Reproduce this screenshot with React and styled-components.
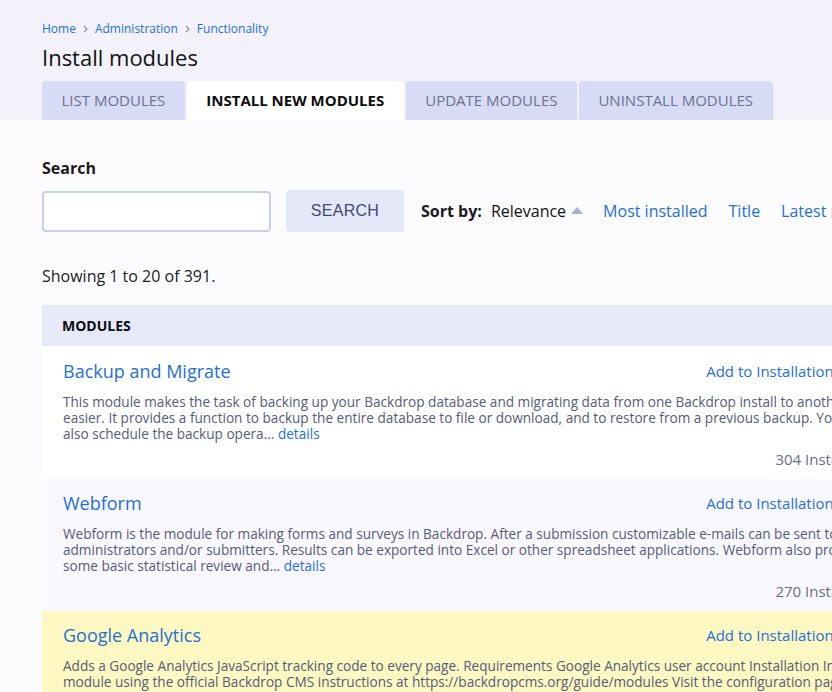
import React from "react";
import styled, { createGlobalStyle } from "styled-components";

const Global = createGlobalStyle`
  html, body { margin: 0; padding: 0; overflow: hidden; }
  body {
    background: #fcfcfe;
    font-family: "Open Sans", "Noto Sans", sans-serif;
    color: #1b1b1f;
  }
  * { box-sizing: border-box; }
  a { text-decoration: none; }
`;

const Page = styled.div`
  width: 832px;
  min-height: 692px;
`;

const Header = styled.header`
  background: #f3f2fb;
  padding: 20px 0 0 42px;
`;

const Breadcrumb = styled.nav`
  display: flex;
  align-items: center;
  gap: 7px;
  font-size: 12px;
  line-height: 18px;
  white-space: nowrap;
`;

const Crumb = styled.a`
  color: #1e6fd9;
`;

const Sep = styled.svg`
  width: 5px;
  height: 8px;
  flex: none;
`;

const Title = styled.h1`
  margin: 4px 0 9px;
  font-size: 22px;
  line-height: 30px;
  font-weight: 400;
  color: #111;
`;

const Tabs = styled.div`
  display: flex;
  gap: 2px;
  white-space: nowrap;
`;

const Tab = styled.a`
  display: block;
  flex: none;
  height: 39px;
  line-height: 39px;
  padding: 0 19.5px;
  font-size: 15px;
  text-transform: uppercase;
  border-radius: 4px 4px 0 0;
  background: ${(p) => (p.$active ? "#ffffff" : "#d7dbf5")};
  color: ${(p) => (p.$active ? "#0d0d10" : "#6c7290")};
  font-weight: ${(p) => (p.$active ? 700 : 400)};
`;

const Content = styled.main`
  padding: 36px 0 0 42px;
`;

const Label = styled.div`
  font-size: 16px;
  font-weight: 700;
  line-height: 24px;
`;

const SearchRow = styled.div`
  display: flex;
  align-items: center;
  margin-top: 10px;
  white-space: nowrap;
`;

const Input = styled.input`
  flex: none;
  width: 229px;
  height: 41px;
  border: 2px solid #c7cfef;
  border-radius: 4px;
  background: #fff;
  outline: none;
`;

const Button = styled.button`
  flex: none;
  margin-left: 15px;
  width: 118px;
  height: 42px;
  border: 0;
  border-radius: 4px;
  background: #e4e7f8;
  color: #434a6b;
  font-family: "Liberation Sans", Arial, sans-serif;
  font-size: 16px;
  letter-spacing: 0.3px;
`;

const Sort = styled.div`
  display: flex;
  flex: none;
  align-items: center;
  margin-left: 17px;
  font-size: 16px;
  line-height: 22px;
`;

const SortLabel = styled.span`
  font-weight: 700;
  margin-right: 9px;
`;

const SortCurrent = styled.span`
  color: #111;
  display: flex;
  align-items: center;
`;

const Arrow = styled.svg`
  width: 12px;
  height: 7px;
  margin: 0 0 2px 5px;
`;

const SortLink = styled.a`
  color: #1e6fd9;
  margin-left: ${(p) => p.$gap || 21}px;
`;

const Summary = styled.p`
  margin: 33px 0 0;
  font-size: 16px;
  line-height: 22px;
`;

const Table = styled.div`
  margin-top: 18px;
  width: 860px;
`;

const TableHead = styled.div`
  height: 41px;
  display: flex;
  align-items: center;
  padding-left: 20px;
  background: #e7e9f8;
  font-size: 14px;
  font-weight: 700;
  color: #0d0d10;
  margin-bottom: 1px;
`;

const rowBg = { odd: "#ffffff", even: "#f9f8fe", featured: "#fef9c2" };

const Row = styled.div`
  display: grid;
  grid-template-columns: 1fr auto;
  grid-template-rows: auto auto auto;
  padding: 12px 20px 12px 21px;
  background: ${(p) => rowBg[p.$tone]};
  min-height: 132px;
`;

const ModuleTitle = styled.a`
  font-size: 18px;
  line-height: 24px;
  color: #1e6fd9;
`;

const AddLink = styled.a`
  font-size: 15px;
  line-height: 24px;
  color: #1e6fd9;
  justify-self: end;
  white-space: nowrap;
`;

const Desc = styled.div`
  grid-column: 1 / -1;
  margin-top: 11px;
  font-size: 13.6px;
  line-height: 16px;
  color: #565b78;
`;

const DescLine = styled.span`
  display: block;
  white-space: nowrap;
`;

const Details = styled.a`
  color: #1e6fd9;
`;

const Installs = styled.div`
  grid-column: 1 / -1;
  justify-self: end;
  margin-top: 8px;
  padding-right: 28px;
  font-size: 15px;
  line-height: 16px;
  color: #6b6f82;
  white-space: nowrap;
`;

const modules = [
  {
    name: "Backup and Migrate",
    tone: "odd",
    lines: [
      "This module makes the task of backing up your Backdrop database and migrating data from one Backdrop install to another",
      "easier. It provides a function to backup the entire database to file or download, and to restore from a previous backup. You can",
      "also schedule the backup opera...",
    ],
    details: true,
    installs: 304,
  },
  {
    name: "Webform",
    tone: "even",
    lines: [
      "Webform is the module for making forms and surveys in Backdrop. After a submission customizable e-mails can be sent to",
      "administrators and/or submitters. Results can be exported into Excel or other spreadsheet applications. Webform also provides",
      "some basic statistical review and...",
    ],
    details: true,
    installs: 270,
  },
  {
    name: "Google Analytics",
    tone: "featured",
    lines: [
      "Adds a Google Analytics JavaScript tracking code to every page. Requirements Google Analytics user account Installation Install this",
      "module using the official Backdrop CMS instructions at https://backdropcms.org/guide/modules Visit the configuration page",
      "at...",
    ],
    details: true,
    installs: 261,
  },
];

const Chevron = () => (
  <Sep viewBox="0 0 5 8">
    <polyline points="1,1 4,4 1,7" fill="none" stroke="#8d92aa" strokeWidth="1.3" />
  </Sep>
);

export default function App() {
  return (
    <Page>
      <Global />
      <Header>
        <Breadcrumb>
          <Crumb href="#">Home</Crumb>
          <Chevron />
          <Crumb href="#">Administration</Crumb>
          <Chevron />
          <Crumb href="#">Functionality</Crumb>
        </Breadcrumb>
        <Title>Install modules</Title>
        <Tabs>
          <Tab href="#">List modules</Tab>
          <Tab href="#" $active>Install new modules</Tab>
          <Tab href="#">Update modules</Tab>
          <Tab href="#">Uninstall modules</Tab>
        </Tabs>
      </Header>
      <Content>
        <Label>Search</Label>
        <SearchRow>
          <Input type="text" />
          <Button>SEARCH</Button>
          <Sort>
            <SortLabel>Sort by:</SortLabel>
            <SortCurrent>
              Relevance
              <Arrow viewBox="0 0 12 7">
                <polygon points="0,7 6,0 12,7" fill="#a9b0d6" />
              </Arrow>
            </SortCurrent>
            <SortLink href="#" $gap={20}>Most installed</SortLink>
            <SortLink href="#">Title</SortLink>
            <SortLink href="#">Latest release</SortLink>
          </Sort>
        </SearchRow>
        <Summary>Showing 1 to 20 of 391.</Summary>
        <Table>
          <TableHead>MODULES</TableHead>
          {modules.map((m) => (
            <Row key={m.name} $tone={m.tone}>
              <ModuleTitle href="#">{m.name}</ModuleTitle>
              <AddLink href="#">Add to Installation queue</AddLink>
              <Desc>
                {m.lines.map((l, i) => (
                  <DescLine key={i}>
                    {l}
                    {i === m.lines.length - 1 && m.details && (
                      <>
                        {" "}
                        <Details href="#">details</Details>
                      </>
                    )}
                  </DescLine>
                ))}
              </Desc>
              <Installs>{m.installs} Installs</Installs>
            </Row>
          ))}
        </Table>
      </Content>
    </Page>
  );
}
